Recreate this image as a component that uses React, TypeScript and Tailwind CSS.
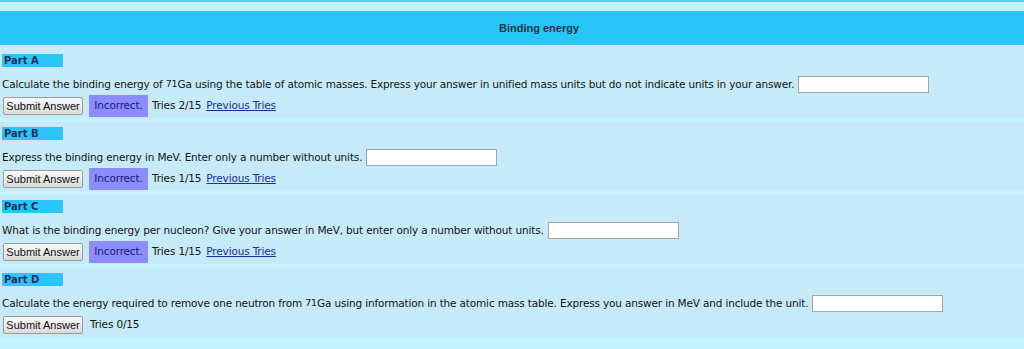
import React from "react";

type Part = {
  label: string;
  question: React.ReactNode;
  tries: string;
  incorrect: boolean;
};

const Ga = () => (
  <>
    <sup className="relative -top-[1px] text-[9.5px]">71</sup>Ga
  </>
);

const PARTS: Part[] = [
  {
    label: "Part A",
    question: (
      <>
        Calculate the binding energy of <Ga /> using the table of atomic masses. Express your answer in unified mass
        units but do not indicate units in your answer.
      </>
    ),
    tries: "Tries 2/15",
    incorrect: true,
  },
  {
    label: "Part B",
    question: <>Express the binding energy in MeV. Enter only a number without units.</>,
    tries: "Tries 1/15",
    incorrect: true,
  },
  {
    label: "Part C",
    question: (
      <>What is the binding energy per nucleon? Give your answer in MeV, but enter only a number without units.</>
    ),
    tries: "Tries 1/15",
    incorrect: true,
  },
  {
    label: "Part D",
    question: (
      <>
        Calculate the energy required to remove one neutron from <Ga /> using information in the atomic mass table.
        Express you answer in MeV and include the unit.
      </>
    ),
    tries: "Tries 0/15",
    incorrect: false,
  },
];

function PartBlock({ part, first }: { part: Part; first: boolean }) {
  return (
    <div className={`bg-[#c6eaf8] ${first ? "pt-[9px]" : "pt-[5px]"} pb-[1px] mb-[4px]`}>
      <div className="ml-[2px] w-[61px] h-[13px] bg-[#2ac4f8] pl-[2px] text-[10px] leading-[13px] font-bold text-[#1b2f5c]">
        {part.label}
      </div>
      <div className="mt-[9px] flex items-center h-[17px] pl-[2px] text-[10.5px] tracking-[-0.16px] text-[#151515]">
        <span className="whitespace-nowrap">{part.question}</span>
        <input
          type="text"
          className="ml-[4px] w-[131px] h-[17px] bg-white border border-[#a4a4a4] outline-none"
        />
      </div>
      <div className="mt-[2px] flex items-center h-[22px] pl-[3px] text-[10.5px] tracking-[-0.16px] text-[#151515]">
        <button className="h-[18px] w-[80px] px-0 whitespace-nowrap rounded-[2px] border border-[#9a9a9a] bg-gradient-to-b from-[#fafafa] to-[#dadada] text-[11px] leading-[16px] tracking-normal text-[#111] font-['Liberation_Sans',Arial,sans-serif]">
          Submit Answer
        </button>
        {part.incorrect ? (
          <div className="ml-[6px] h-[22px] w-[59px] bg-[#8c8cfc] flex items-center justify-center text-[#1a1a7a]">
            Incorrect.
          </div>
        ) : null}
        <span className={`whitespace-nowrap ${part.incorrect ? "ml-[4px]" : "ml-[7px]"}`}>{part.tries}</span>
        {part.incorrect ? (
          <a href="#" className="ml-[5px] whitespace-nowrap text-[#1a2f9a] underline">
            Previous Tries
          </a>
        ) : null}
      </div>
    </div>
  );
}

export default function App() {
  return (
    <div className="w-[1024px] h-[349px] overflow-hidden bg-[#c4f2fd] font-['DejaVu_Sans',Verdana,sans-serif]">
      <div className="h-[2px] bg-[#5ccbea]" />
      <div className="h-[9px]" />
      <div className="h-[34px] bg-[#29c5f9] flex items-center justify-center">
        <span className="font-['Liberation_Sans',Arial,sans-serif] font-bold text-[11px] text-[#1d3646] ml-[54px]">
          Binding energy
        </span>
      </div>
      {PARTS.map((p, i) => (
        <PartBlock key={p.label} part={p} first={i === 0} />
      ))}
    </div>
  );
}
